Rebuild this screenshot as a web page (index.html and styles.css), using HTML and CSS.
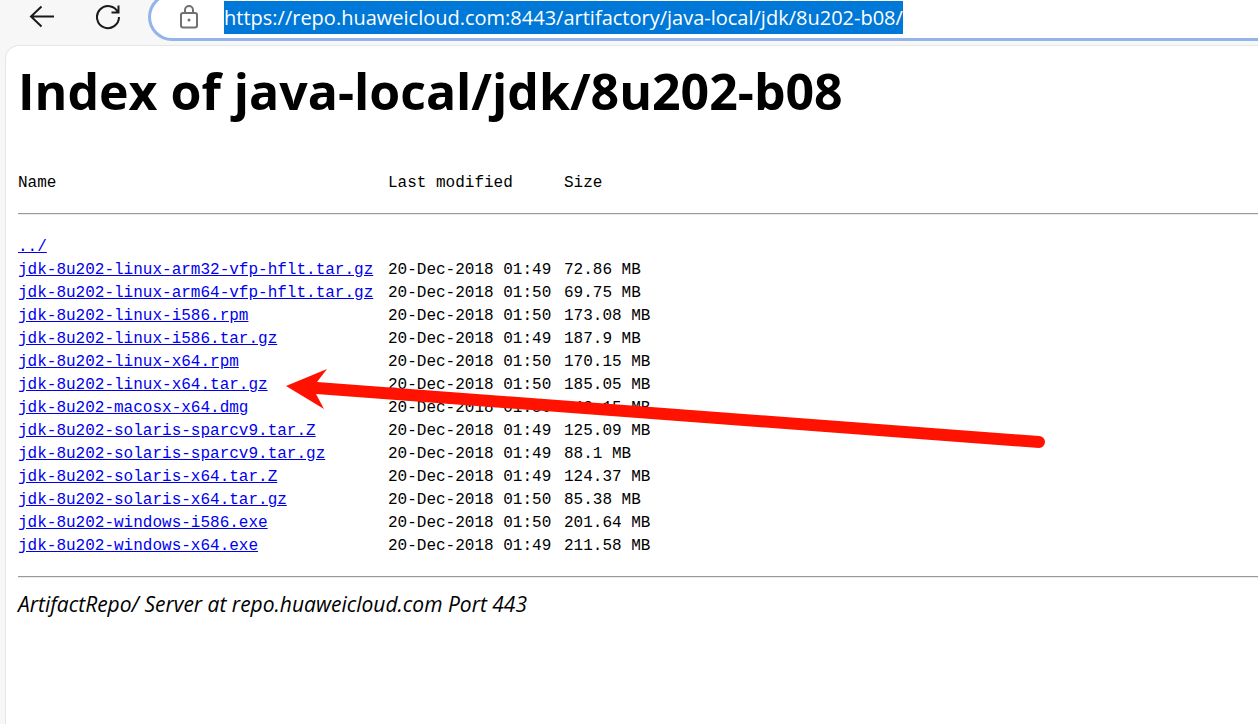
FILE: index.html
```html
<!DOCTYPE html>
<html lang="en">
<head>
    <meta charset="UTF-8">
    <meta name="viewport" content="width=device-width, initial-scale=1.0">
    <title>Index of java-local/jdk/8u202-b08</title>
    <link rel="stylesheet" href="styles.css">
</head>
<body>
    <header class="toolbar">
        <button class="nav-button" type="button" aria-label="Back">
            <svg width="26" height="26" viewBox="0 0 26 26"><path d="M25 12.500H2M12.500 2.500L2 12.500l10.500 10"/></svg>
        </button>
        <button class="nav-button" type="button" aria-label="Refresh">
            <svg width="26" height="26" viewBox="0 0 26 26"><path d="M23 8.500A11 11 0 1 0 24 13M23.500 1.500V8.500H16.500"/></svg>
        </button>
        <div class="address-bar">
            <svg class="lock-icon" width="20" height="24" viewBox="0 0 20 24">
                <rect x="2" y="8" width="16" height="14.500" rx="2"/>
                <path d="M6 8V5a4 4 0 0 1 8 0V8"/>
                <circle cx="10" cy="15" r="1.500"/>
            </svg>
            <input class="address-input" type="text" aria-label="Address" spellcheck="false" value="https://repo.huaweicloud.com:8443/artifactory/java-local/jdk/8u202-b08/">
        </div>
    </header>

    <main class="page">
        <h1 class="page-title">Index of java-local/jdk/8u202-b08</h1>

        <table class="listing">
            <colgroup>
                <col class="col-name">
                <col class="col-date">
                <col>
            </colgroup>
            <thead>
                <tr><th>Name</th><th>Last modified</th><th>Size</th></tr>
            </thead>
            <tbody>
                <tr class="rule"><td colspan="3"><hr></td></tr>
                <tr><td><a href="../">../</a></td><td></td><td></td></tr>
                <tr><td><a href="jdk-8u202-linux-arm32-vfp-hflt.tar.gz">jdk-8u202-linux-arm32-vfp-hflt.tar.gz</a></td><td>20-Dec-2018 01:49</td><td>72.86 MB</td></tr>
                <tr><td><a href="jdk-8u202-linux-arm64-vfp-hflt.tar.gz">jdk-8u202-linux-arm64-vfp-hflt.tar.gz</a></td><td>20-Dec-2018 01:50</td><td>69.75 MB</td></tr>
                <tr><td><a href="jdk-8u202-linux-i586.rpm">jdk-8u202-linux-i586.rpm</a></td><td>20-Dec-2018 01:50</td><td>173.08 MB</td></tr>
                <tr><td><a href="jdk-8u202-linux-i586.tar.gz">jdk-8u202-linux-i586.tar.gz</a></td><td>20-Dec-2018 01:49</td><td>187.9 MB</td></tr>
                <tr><td><a href="jdk-8u202-linux-x64.rpm">jdk-8u202-linux-x64.rpm</a></td><td>20-Dec-2018 01:50</td><td>170.15 MB</td></tr>
                <tr><td><a href="jdk-8u202-linux-x64.tar.gz">jdk-8u202-linux-x64.tar.gz</a></td><td>20-Dec-2018 01:50</td><td>185.05 MB</td></tr>
                <tr><td><a href="jdk-8u202-macosx-x64.dmg">jdk-8u202-macosx-x64.dmg</a></td><td>20-Dec-2018 01:50</td><td>249.15 MB</td></tr>
                <tr><td><a href="jdk-8u202-solaris-sparcv9.tar.Z">jdk-8u202-solaris-sparcv9.tar.Z</a></td><td>20-Dec-2018 01:49</td><td>125.09 MB</td></tr>
                <tr><td><a href="jdk-8u202-solaris-sparcv9.tar.gz">jdk-8u202-solaris-sparcv9.tar.gz</a></td><td>20-Dec-2018 01:49</td><td>88.1 MB</td></tr>
                <tr><td><a href="jdk-8u202-solaris-x64.tar.Z">jdk-8u202-solaris-x64.tar.Z</a></td><td>20-Dec-2018 01:49</td><td>124.37 MB</td></tr>
                <tr><td><a href="jdk-8u202-solaris-x64.tar.gz">jdk-8u202-solaris-x64.tar.gz</a></td><td>20-Dec-2018 01:50</td><td>85.38 MB</td></tr>
                <tr><td><a href="jdk-8u202-windows-i586.exe">jdk-8u202-windows-i586.exe</a></td><td>20-Dec-2018 01:50</td><td>201.64 MB</td></tr>
                <tr><td><a href="jdk-8u202-windows-x64.exe">jdk-8u202-windows-x64.exe</a></td><td>20-Dec-2018 01:49</td><td>211.58 MB</td></tr>
            </tbody>
        </table>

        <hr>
        <address class="server">ArtifactRepo/ Server at repo.huaweicloud.com Port 443</address>
    </main>

    <!-- Arrow pointing at the linux x64 archive -->
    <svg class="arrow" width="760" height="82" viewBox="286 368 760 82" aria-hidden="true">
        <path d="M286 386L327 369L317 382L1039 436A6 6 0 0 1 1039 448L316 394L324 409Z"/>
    </svg>
</body>
</html>
```

FILE: styles.css
```css
* {
    box-sizing: border-box;
}

body {
    margin: 0;
    min-height: 100vh;
    display: flex;
    flex-direction: column;
    gap: 4px;
    position: relative;
    overflow: hidden;
    background-color: #f7f7f7;
    color: #000;
    font-family: "Segoe UI", "Open Sans", sans-serif;
}

/* Browser toolbar, cut off at the top edge of the window */
.toolbar {
    display: flex;
    align-items: flex-end;
    height: 41px;
    padding-left: 21px;
    overflow: hidden;
}

.nav-button {
    width: 42px;
    height: 48px;
    margin-right: 24px;
    padding: 0;
    border: none;
    background: none;
    display: flex;
    align-items: center;
    justify-content: center;
}

.nav-button svg {
    fill: none;
    stroke: #1a1a1a;
    stroke-width: 2;
}

.nav-button:nth-child(2) {
    margin-right: 19px;
}

.address-bar {
    flex: 1;
    display: flex;
    align-items: center;
    gap: 25px;
    height: 48px;
    padding-left: 28px;
    background-color: #fff;
    border: 3px solid #92b4ea;
    border-right: none;
    border-radius: 24px 0 0 24px;
}

.lock-icon {
    flex: none;
    fill: none;
    stroke: #707070;
    stroke-width: 2;
}

.lock-icon circle {
    fill: #707070;
    stroke: none;
}

.address-input {
    field-sizing: content;
    height: 33px;
    padding: 0;
    border: none;
    outline: none;
    background-color: #0078d7;
    color: #fff;
    font-family: inherit;
    font-size: 20px;
}

/* Document area */
.page {
    flex: 1;
    margin-left: 5px;
    padding: 10px 0 0 12px;
    background-color: #fff;
    border: 1px solid #e6e6e6;
    border-right: none;
    border-bottom: none;
    border-radius: 14px 0 0 0;
}

.page-title {
    margin: 0 0 46px;
    font-size: 50px;
    line-height: 70px;
    font-weight: 700;
    white-space: nowrap;
}

.listing {
    width: 100%;
    table-layout: fixed;
    border-collapse: collapse;
    font-family: "Liberation Mono", monospace;
    font-size: 16px;
    line-height: 23px;
}

.col-name {
    width: 370px;
}

.col-date {
    width: 176px;
}

.listing th,
.listing td {
    padding: 0;
    font-weight: 400;
    text-align: left;
    white-space: nowrap;
}

.listing .rule td {
    padding: 18px 0 21px;
}

hr {
    height: 2px;
    margin: 0;
    border: none;
    border-top: 1px solid #999;
    border-bottom: 1px solid #ececec;
}

a {
    color: #0000ee;
    text-decoration: underline;
}

.listing + hr {
    margin-top: 18px;
}

.server {
    margin-top: 12px;
    font-size: 21px;
    line-height: 28px;
    font-style: italic;
}

.arrow {
    position: absolute;
    left: 286px;
    top: 368px;
    fill: #ff1200;
    pointer-events: none;
}
```
